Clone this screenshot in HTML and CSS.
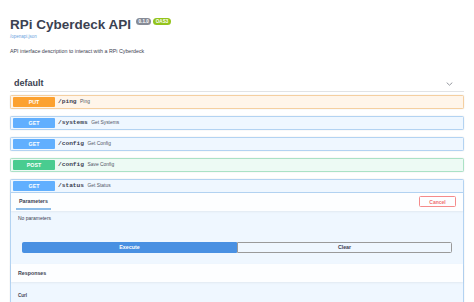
FILE: index.html
```
<html>
  <head>
    <link rel="stylesheet" href="styles.css">
  </head>
  <body>
    <div class="wrapper">
      <section class="info">
        <div class="title">
          <h2>RPi Cyberdeck API</h2>
          <span class="version grey">0.1.0</span>
          <span class="version green">OAS3</span>
        </div>
        <a class="link" href="#">/openapi.json</a>
        <p class="description">API interface description to interact with a RPi Cyberdeck</p>
      </section>

      <section class="tag">
        <h3 class="tag-header">
          <span>default</span>
          <svg class="chevron" viewBox="0 0 7 4" width="7" height="4">
            <path d="M0.7 0.6l2.8 2.6l2.8-2.6"/>
          </svg>
        </h3>

        <div class="ops">
          <div class="opblock put">
            <div class="summary">
              <span class="method">PUT</span>
              <span class="path">/ping</span>
              <span class="desc">Ping</span>
            </div>
          </div>
          <div class="opblock get">
            <div class="summary">
              <span class="method">GET</span>
              <span class="path">/systems</span>
              <span class="desc">Get Systems</span>
            </div>
          </div>
          <div class="opblock get">
            <div class="summary">
              <span class="method">GET</span>
              <span class="path">/config</span>
              <span class="desc">Get Config</span>
            </div>
          </div>
          <div class="opblock post">
            <div class="summary">
              <span class="method">POST</span>
              <span class="path">/config</span>
              <span class="desc">Save Config</span>
            </div>
          </div>
          <div class="opblock get open">
            <div class="summary">
              <span class="method">GET</span>
              <span class="path">/status</span>
              <span class="desc">Get Status</span>
            </div>
            <div class="body">
              <div class="section-header">
                <span class="tab">Parameters</span>
                <button class="cancel">Cancel</button>
              </div>
              <p class="no-params">No parameters</p>
              <div class="btn-group">
                <button class="execute">Execute</button>
                <button class="clear">Clear</button>
              </div>
              <div class="section-header">
                <span class="responses">Responses</span>
              </div>
              <div class="responses-body">
                <h4>Curl</h4>
              </div>
            </div>
          </div>
        </div>
      </section>
    </div>
  </body>
</html>
```

FILE: styles.css
```
:root {
  --text: #3b4151;
  --get: #61affe;
  --get-line: #b3d3f2;
  --get-bg: #eff7ff;
  --put: #fca130;
  --put-line: #f5cfa0;
  --put-bg: #fff5ea;
  --post: #49cc90;
  --post-line: #abe2c6;
  --post-bg: #edfaf4;
}

html, body {
  height: 100%;
  overflow: hidden;
}

body {
  margin: 0;
  background: #fff;
  color: var(--text);
  font-family: "Liberation Sans", Arial, sans-serif;
}

.wrapper {
  padding: 17px 10px 0;
}

.title {
  display: flex;
  align-items: flex-start;
}

.title h2 {
  margin: 0 5px 0 0;
  font-size: 13.5px;
  line-height: 16px;
  font-weight: bold;
}

.version {
  margin-top: 1px;
  margin-right: 2px;
  padding: 0 2.5px;
  border-radius: 4px;
  color: #fff;
  font-size: 4.6px;
  font-weight: bold;
  line-height: 7px;
}

.version.grey {
  background: #868b96;
}

.version.green {
  background: #93c41c;
}

.link {
  display: block;
  margin-top: 1px;
  color: #6b9fde;
  font-size: 4.5px;
  line-height: 6px;
  text-decoration: none;
}

.description {
  margin: 8px 0 0;
  font-size: 5.3px;
  line-height: 7px;
}

.tag {
  margin-top: 19px;
}

.tag-header {
  display: flex;
  align-items: center;
  justify-content: space-between;
  margin: 0;
  padding: 3.5px 11px 2px 4px;
  border-bottom: 1px solid rgba(59, 65, 81, 0.15);
  font-size: 9px;
  line-height: 11px;
  font-weight: bold;
}

.chevron {
  fill: none;
  stroke: #7a7e87;
  stroke-width: 0.8;
  margin-top: 1px;
}

.ops {
  padding-top: 3px;
}

.opblock {
  margin-bottom: 7px;
  border: 1px solid;
  border-radius: 1.5px;
  box-shadow: 0 0 1.5px rgba(0, 0, 0, 0.12);
}

.opblock.put {
  background: var(--put-bg);
  border-color: var(--put-line);
}

.opblock.get {
  background: var(--get-bg);
  border-color: var(--get-line);
}

.opblock.post {
  background: var(--post-bg);
  border-color: var(--post-line);
}

.summary {
  display: flex;
  align-items: center;
  padding: 1px 2px;
}

.open .summary {
  border-bottom: 1px solid var(--get-line);
}

.method {
  width: 42px;
  border-radius: 1px;
  color: #fff;
  text-align: center;
  font-size: 5.3px;
  line-height: 10px;
  font-weight: bold;
}

.put .method {
  background: var(--put);
}

.get .method {
  background: var(--get);
}

.post .method {
  background: var(--post);
}

.path {
  padding: 0 3.5px 0 3px;
  font-family: "Liberation Mono", "Courier New", monospace;
  font-size: 6.2px;
  font-weight: bold;
}

.desc {
  font-size: 4.9px;
  color: #4f5565;
}

.section-header {
  display: flex;
  align-items: center;
  justify-content: space-between;
  min-height: 18px;
  padding: 0 7px 0 5px;
  background: rgba(255, 255, 255, 0.85);
  box-shadow: 0 1px 2px rgba(0, 0, 0, 0.06);
}

.tab {
  padding: 5px 3px 3.5px;
  border-bottom: 2px solid #8dbde9;
  font-size: 5.3px;
  line-height: 7px;
  font-weight: bold;
}

.cancel {
  width: 37px;
  height: 11px;
  padding: 0;
  border: 1px solid #f58b8b;
  border-radius: 1.5px;
  background: transparent;
  color: #f07070;
  font-family: inherit;
  font-size: 5px;
  font-weight: bold;
}

.no-params {
  margin: 0;
  padding: 4px 7px 0;
  font-size: 5px;
  line-height: 7px;
}

.btn-group {
  display: flex;
  padding: 20px 11px 11.5px;
}

.btn-group button {
  flex: 1;
  height: 11px;
  padding: 0;
  font-family: inherit;
  font-size: 5.3px;
  font-weight: bold;
}

.execute {
  border: 1px solid #4990e2;
  border-radius: 1.5px 0 0 1.5px;
  background: #4990e2;
  color: #fff;
}

.clear {
  border: 1px solid #9a9a9a;
  border-radius: 0 1.5px 1.5px 0;
  background: transparent;
  color: var(--text);
}

.responses {
  padding-left: 2px;
  font-size: 5.3px;
  line-height: 7px;
  font-weight: bold;
}

.responses-body {
  padding: 11px 7px 20px;
}

.responses-body h4 {
  margin: 0;
  font-size: 4.5px;
  line-height: 6px;
}
```
